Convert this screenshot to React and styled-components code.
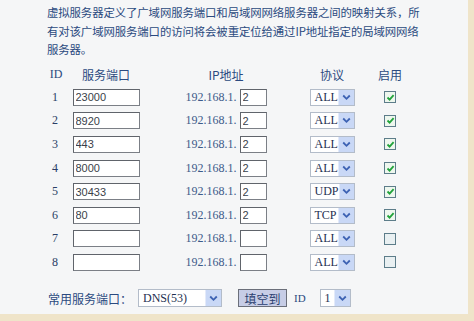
import React from "react";
import styled, { createGlobalStyle } from "styled-components";

const rules = [
  { id: 1, port: "23000", ip: "2", proto: "ALL", on: true },
  { id: 2, port: "8920", ip: "2", proto: "ALL", on: true },
  { id: 3, port: "443", ip: "2", proto: "ALL", on: true },
  { id: 4, port: "8000", ip: "2", proto: "ALL", on: true },
  { id: 5, port: "30433", ip: "2", proto: "UDP", on: true },
  { id: 6, port: "80", ip: "2", proto: "TCP", on: true },
  { id: 7, port: "", ip: "", proto: "ALL", on: false },
  { id: 8, port: "", ip: "", proto: "ALL", on: false },
];

export default function App() {
  return (
    <>
      <GlobalStyle />
      <Panel>
        <Intro>
          虚拟服务器定义了广域网服务端口和局域网网络服务器之间的映射关系，所
          <br />
          有对该广域网服务端口的访问将会被重定位给通过IP地址指定的局域网网络
          <br />
          服务器。
        </Intro>

        <Table>
          <Head $serif>ID</Head>
          <Head>服务端口</Head>
          <Head>IP地址</Head>
          <Head>协议</Head>
          <Head>启用</Head>

          {rules.map((r) => (
            <React.Fragment key={r.id}>
              <Cell>
                <Num>{r.id}</Num>
              </Cell>
              <Cell>
                <TextBox $w={67} value={r.port} readOnly />
              </Cell>
              <Cell>
                <IpPrefix>192.168.1.</IpPrefix>
                <TextBox $w={27} value={r.ip} readOnly />
              </Cell>
              <Cell>
                <Select $w={45}>
                  <SelectText>{r.proto}</SelectText>
                  <Arrow />
                </Select>
              </Cell>
              <Cell>
                <Check $on={r.on}>
                  {r.on && (
                    <svg width="9" height="9" viewBox="0 0 9 9">
                      <path
                        d="M1.5 4.5 L3.6 6.6 L7.6 2.2"
                        fill="none"
                        stroke="#21a33a"
                        strokeWidth="1.8"
                      />
                    </svg>
                  )}
                </Check>
              </Cell>
            </React.Fragment>
          ))}
        </Table>

        <Footer>
          <Label>常用服务端口：</Label>
          <Select $w={84} $h={18}>
            <SelectText>DNS(53)</SelectText>
            <Arrow />
          </Select>
          <FillButton>填空到</FillButton>
          <IdLabel>ID</IdLabel>
          <Select $w={31} $h={18}>
            <SelectText>1</SelectText>
            <Arrow />
          </Select>
        </Footer>
      </Panel>
    </>
  );
}

function Arrow() {
  return (
    <ArrowBox>
      <svg width="9" height="7" viewBox="0 0 9 7">
        <path
          d="M1.2 1.5 L4.5 4.8 L7.8 1.5"
          fill="none"
          stroke="#3d62b3"
          strokeWidth="1.8"
        />
      </svg>
    </ArrowBox>
  );
}

const GlobalStyle = createGlobalStyle`
  html, body {
    margin: 0;
    padding: 0;
    background: #efe4c9;
  }
`;

const Panel = styled.div`
  width: 468px;
  height: 314px;
  background: #f5f6f7;
  box-sizing: border-box;
  padding: 3px 0 0 47px;
  font-family: "Noto Sans CJK SC", "Liberation Sans", sans-serif;
  color: #2b4a80;
`;

const Intro = styled.div`
  font-size: 11.4px;
  line-height: 18.5px;
  letter-spacing: -0.1px;
  white-space: nowrap;
`;

const Table = styled.div`
  display: grid;
  grid-template-columns: 24px 76px 164px 48px 68px;
  grid-template-rows: 22px;
  grid-auto-rows: 23.6px;
  margin: 5px 0 0 -3px;
`;

const Head = styled.div`
  display: flex;
  align-items: center;
  justify-content: center;
  font-size: 12px;
  font-family: ${(p) =>
    p.$serif ? '"Liberation Serif", serif' : '"Noto Sans CJK SC", sans-serif'};
  color: #2b4a80;
`;

const Cell = styled.div`
  display: flex;
  align-items: center;
  justify-content: center;
`;

const Num = styled.span`
  font-family: "Liberation Serif", serif;
  font-size: 12px;
  color: #2a3e66;
  margin-right: 2px;
`;

const TextBox = styled.input`
  width: ${(p) => p.$w}px;
  height: 17px;
  box-sizing: border-box;
  border: 1px solid #7b7f86;
  border-top-color: #60646b;
  border-left-color: #60646b;
  background: #fff;
  padding: 0 2px;
  margin: 0;
  font-family: "Liberation Sans", sans-serif;
  font-size: 11px;
  color: #3a3f4a;
  outline: none;
`;

const IpPrefix = styled.span`
  font-family: "Liberation Serif", serif;
  font-size: 12px;
  color: #3d5a8a;
  margin-right: 3px;
`;

const Select = styled.div`
  width: ${(p) => p.$w}px;
  height: ${(p) => p.$h || 17}px;
  box-sizing: border-box;
  display: flex;
  align-items: stretch;
  border: 1px solid #b3bcc9;
  background: #fff;
`;

const SelectText = styled.span`
  flex: 1;
  display: flex;
  align-items: center;
  padding-left: 4px;
  font-family: "Liberation Serif", serif;
  font-size: 12px;
  color: #1e2f50;
  white-space: nowrap;
`;

const ArrowBox = styled.span`
  width: 15px;
  display: flex;
  align-items: center;
  justify-content: center;
  background: #c9d8f6;
  border-left: 1px solid #e3eafa;
`;

const Check = styled.span`
  width: 12px;
  height: 12px;
  box-sizing: border-box;
  display: flex;
  align-items: center;
  justify-content: center;
  border: 1px solid #5d7d8a;
  background: ${(p) => (p.$on ? "#eef7ee" : "#e9f0f2")};
`;

const Footer = styled.div`
  display: flex;
  align-items: center;
  height: 18px;
  margin-top: 15px;
  padding-left: 1px;
`;

const Label = styled.span`
  font-size: 12px;
  color: #2b4a80;
  width: 90px;
`;

const FillButton = styled.button`
  height: 18px;
  width: 49px;
  margin-left: 16px;
  padding: 0;
  box-sizing: border-box;
  border: 1px solid #6b6f7a;
  background: #c7cde6;
  font-family: "Noto Sans CJK SC", sans-serif;
  font-size: 12px;
  color: #2b3f70;
`;

const IdLabel = styled.span`
  font-family: "Liberation Serif", serif;
  font-size: 11px;
  color: #2b4a80;
  margin: 0 14px 0 7px;
`;
